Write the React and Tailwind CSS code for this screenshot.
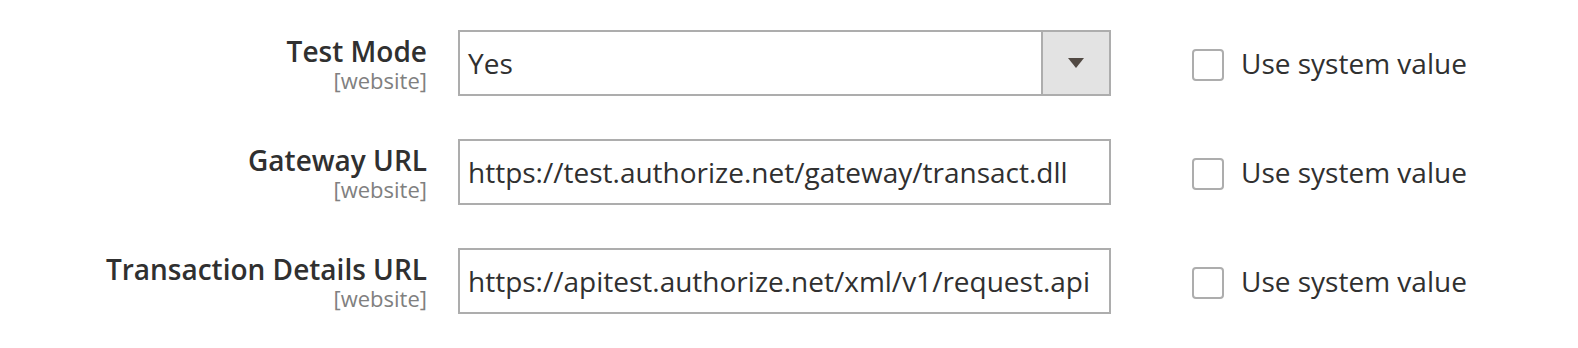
import React, { useState } from "react";

const fields = [
    { id: "test_mode", label: "Test Mode", type: "select", value: "Yes" },
    { id: "gateway_url", label: "Gateway URL", type: "text", value: "https://test.authorize.net/gateway/transact.dll" },
    { id: "trans_details_url", label: "Transaction Details URL", type: "text", value: "https://apitest.authorize.net/xml/v1/request.api" },
];

function ConfigRow({ field }) {
    const [inherit, setInherit] = useState(false);

    return (
        <div className="flex items-start">
            {/* Label + scope */}
            <div className="w-[427px] shrink-0 pt-[3px] text-right">
                <div className="text-[28px] leading-[36px] font-semibold text-[#303030]">{field.label}</div>
                <div className="text-[22px] leading-[22px] text-[#808080]">[website]</div>
            </div>

            {/* Control */}
            <div className="ml-[31px] w-[653px] shrink-0">
                {field.type === "select" ? (
                    <div className="flex h-[66px] border-2 border-[#adadad] bg-white">
                        <div className="flex flex-1 items-center pl-[8px] text-[28px] leading-[38px] text-[#303030]">
                            {field.value}
                        </div>
                        <div className="flex w-[68px] items-center justify-center border-l-2 border-[#adadad] bg-[#e3e3e3]">
                            <svg width="16" height="10" viewBox="0 0 16 10">
                                <path d="M0 0h16L8 10z" fill="#514943" />
                            </svg>
                        </div>
                    </div>
                ) : (
                    <input
                        defaultValue={field.value}
                        className="block h-[66px] w-full border-2 border-[#adadad] bg-white pl-[8px] text-[28px] leading-[38px] text-[#303030] outline-none"
                    />
                )}
            </div>

            {/* Use system value */}
            <label className="ml-[81px] flex items-center pt-[14px]">
                <span
                    onClick={() => setInherit(!inherit)}
                    className="mt-[4px] block h-[32px] w-[32px] rounded-[4px] border-2 border-[#adadad] bg-white"
                />
                <span className="ml-[17px] text-[28px] leading-[38px] text-[#303030]">Use system value</span>
            </label>
        </div>
    );
}

export default function App() {
    return (
        <div
            className="min-h-[348px] bg-white pt-[30px] flex flex-col gap-[43px]"
            style={{ fontFamily: '"Open Sans", sans-serif' }}
        >
            {fields.map((f) => (
                <ConfigRow key={f.id} field={f} />
            ))}
        </div>
    );
}
